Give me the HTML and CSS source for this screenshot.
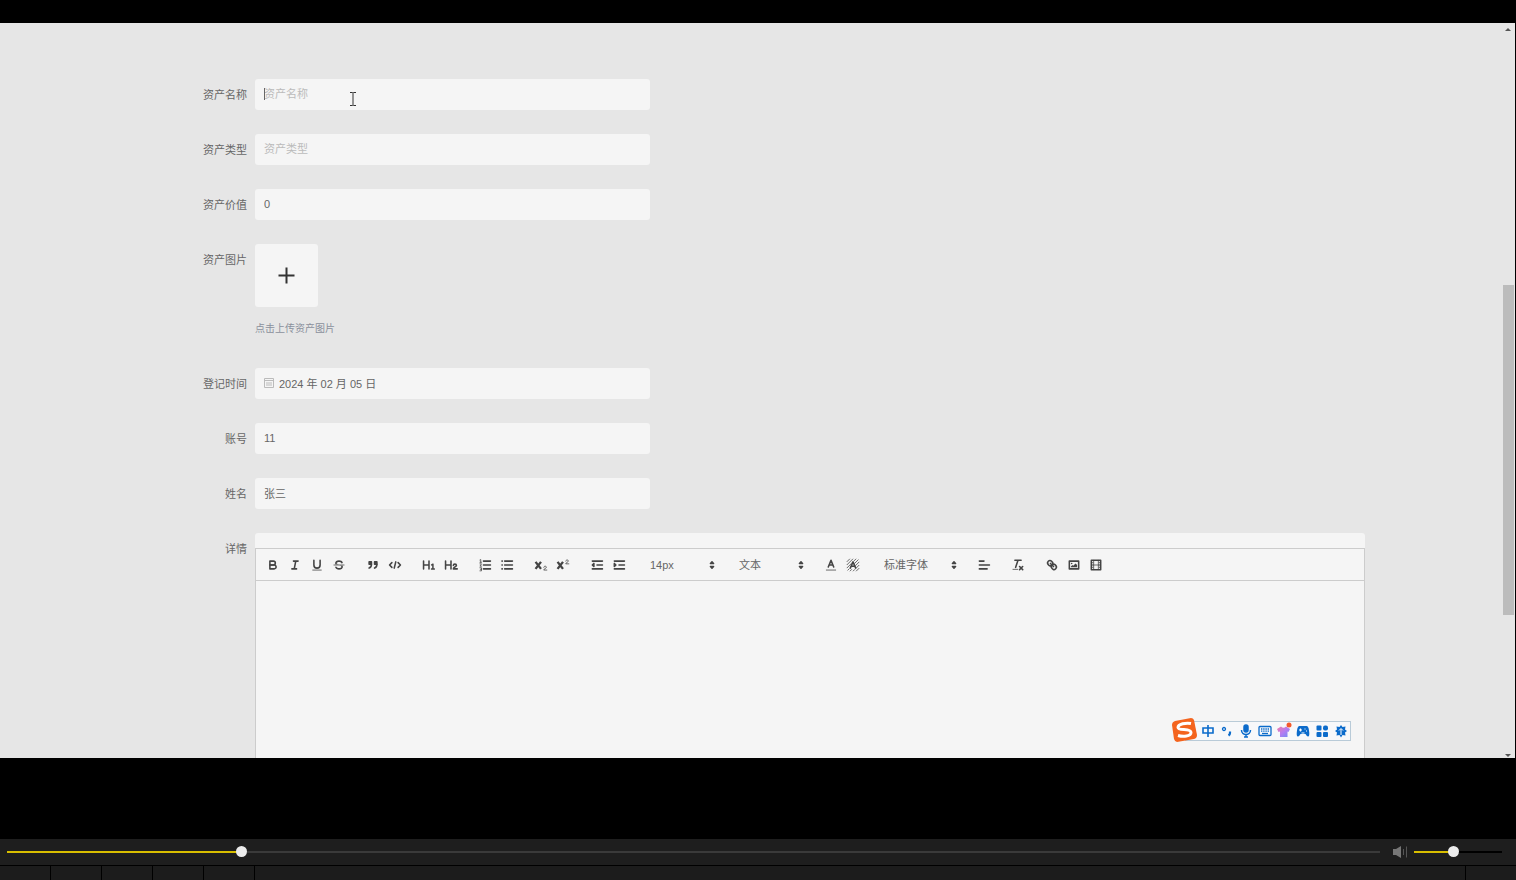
FILE: index.html
```html
<!DOCTYPE html>
<html lang="zh-CN">
<head>
    <meta charset="UTF-8">
    <meta name="viewport" content="width=device-width, initial-scale=1.0">
    <title>资产登记</title>
    <link rel="stylesheet" href="styles.css">
</head>
<body>
    <main class="screen">
        <form class="asset-form">
            <div class="form-item">
                <label class="form-label" for="name">资产名称</label>
                <div class="field">
                    <input class="text-input" id="name" type="text" placeholder="资产名称">
                    <span class="caret"></span>
                </div>
            </div>
            <div class="form-item">
                <label class="form-label" for="type">资产类型</label>
                <div class="field"><input class="text-input" id="type" type="text" placeholder="资产类型"></div>
            </div>
            <div class="form-item">
                <label class="form-label" for="price">资产价值</label>
                <div class="field"><input class="text-input" id="price" type="text" value="0"></div>
            </div>
            <div class="form-item">
                <label class="form-label" for="upload">资产图片</label>
                <div class="upload">
                    <button class="upload-btn" id="upload" type="button" aria-label="上传">
                        <svg width="17" height="17" viewBox="0 0 17 17"><path d="M8.5 .5v16M.5 8.5h16" stroke="#333" stroke-width="2" fill="none"/></svg>
                    </button>
                    <p class="upload-tip">点击上传资产图片</p>
                </div>
            </div>
            <div class="form-item">
                <label class="form-label" for="date">登记时间</label>
                <div class="field date-field">
                    <svg class="date-icon" width="10" height="10" viewBox="0 0 10 10" fill="none" stroke="#bbb"><path d="M.5 .5h9v9h-9zM.5 2.500h9M2 5h6M2 7h6"/></svg>
                    <input class="text-input" id="date" type="text" value="2024 年 02 月 05 日">
                </div>
            </div>
            <div class="form-item">
                <label class="form-label" for="account">账号</label>
                <div class="field"><input class="text-input" id="account" type="text" value="11"></div>
            </div>
            <div class="form-item">
                <label class="form-label" for="username">姓名</label>
                <div class="field"><input class="text-input" id="username" type="text" value="张三"></div>
            </div>
            <div class="form-item">
                <label class="form-label" for="detail">详情</label>
                <div class="editor">
                    <div class="toolbar">
                        <span class="formats">
                            <button type="button" aria-label="bold"><svg viewBox="0 0 18 18"><path class="st" d="M5,4H9.5A2.5,2.5,0,0,1,12,6.5v0A2.5,2.5,0,0,1,9.5,9H5Z"/><path class="st" d="M5,9h5.5A2.5,2.5,0,0,1,13,11.5v0A2.5,2.5,0,0,1,10.5,14H5Z"/></svg></button>
                            <button type="button" aria-label="italic"><svg viewBox="0 0 18 18"><path class="st" d="M7,4h6M5,14h6M8,14L10,4"/></svg></button>
                            <button type="button" aria-label="underline"><svg viewBox="0 0 18 18"><path class="st" d="M5,3V9a4.012,4.012,0,0,0,4,4H9a4.012,4.012,0,0,0,4-4V3"/><rect class="fl" x="3" y="15" width="12" height="1"/></svg></button>
                            <button type="button" aria-label="strike"><svg viewBox="0 0 18 18"><path class="thin" d="M15.5,9H2.5"/><path class="fl" d="M9.007,8C6.542,7.791,6,7.519,6,6.5,6,5.792,7.283,5,9,5c1.571,0,2.765.679,2.969,1.309a1,1,0,0,0,1.9-.617C13.356,4.106,11.354,3,9,3,6.2,3,4,4.538,4,6.5a3.2,3.2,0,0,0,.5,1.843Z"/><path class="fl" d="M8.984,10C11.457,10.208,12,10.479,12,11.5c0,.708-1.283,1.5-3,1.5-1.571,0-2.765-.679-2.969-1.309a1,1,0,1,0-1.9.617C4.644,13.894,6.646,15,9,15c2.8,0,5-1.538,5-3.5a3.2,3.2,0,0,0-.5-1.843Z"/></svg></button>
                        </span>
                        <span class="formats">
                            <button type="button" aria-label="blockquote"><svg viewBox="0 0 18 18"><path class="fl st" d="M4,5h3v3H4zM11,5h3v3h-3z"/><path class="st" d="M7,8c0,4.031-3,5-3,5M14,8c0,4.031-3,5-3,5"/></svg></button>
                            <button type="button" aria-label="code"><svg viewBox="0 0 18 18"><path class="st" d="M5,6 2,9 5,12M13,6 16,9 13,12M10,5L8,13"/></svg></button>
                        </span>
                        <span class="formats">
                            <button type="button" aria-label="H1"><svg viewBox="0 0 18 18"><path class="fl" d="M10,4V14a1,1,0,0,1-2,0V10H3v4a1,1,0,0,1-2,0V4A1,1,0,0,1,3,4V8H8V4a1,1,0,0,1,2,0Zm6.068,9.209H14.98V7.59a.543.543,0,0,0-.605-.605h-.627a1.01,1.01,0,0,0-.748.286L11.645,8.5a.544.544,0,0,0-.022.858l.352.385a.53.53,0,0,0,.847.011l.242-.22v3.675H12a.535.535,0,0,0-.605.6v.539a.54.54,0,0,0,.605.6h4.070a.54.54,0,0,0,.605-.6v-.539a.535.535,0,0,0-.607-.6Z"/></svg></button>
                            <button type="button" aria-label="H2"><svg viewBox="0 0 18 18"><path class="st" d="M2,4V14M9,4V14M2,9H9M12,9.5c0-2.200 4-2.200 4,0C16,11 12,12 12,14h5"/></svg></button>
                        </span>
                        <span class="formats">
                            <button type="button" aria-label="ordered"><svg viewBox="0 0 18 18"><path class="st" d="M7,4h9M7,9h9M7,14h9"/><path class="thin" d="M2.500,2.500 3.500,2V5.500M2.500,5.500h2M2.500,7.500h2L2.500,10.500h2M2.500,12.500h2v4h-2M3,14.500h1.500"/></svg></button>
                            <button type="button" aria-label="bullet"><svg viewBox="0 0 18 18"><path class="st" d="M6,4h10M6,9h10M6,14h10M2.500,4h.5M2.500,9h.5M2.500,14h.5"/></svg></button>
                        </span>
                        <span class="formats">
                            <button type="button" aria-label="sub"><svg viewBox="0 0 18 18"><path class="bold" d="M2,5L9,14M9,5L2,14"/><path class="thin" d="M12.500,12c0-2 3.500-2 3.500,0 0,1-3.500,2-3.500,3.500h4"/></svg></button>
                            <button type="button" aria-label="super"><svg viewBox="0 0 18 18"><path class="bold" d="M2,5L9,14M9,5L2,14"/><path class="thin" d="M12.500,4c0-2 3.500-2 3.500,0 0,1-3.500,2-3.500,3.500h4"/></svg></button>
                        </span>
                        <span class="formats">
                            <button type="button" aria-label="outdent"><svg viewBox="0 0 18 18"><path class="st" d="M3,14h13M3,4h13M9,9h7"/><path class="fl st" d="M5,7V11L3,9Z"/></svg></button>
                            <button type="button" aria-label="indent"><svg viewBox="0 0 18 18"><path class="st" d="M3,14h13M3,4h13M9,9h7"/><path class="fl st" d="M3,7V11L5,9Z"/></svg></button>
                        </span>
                        <span class="picker">
                            <select aria-label="字号"><option>14px</option></select>
                            <svg viewBox="0 0 18 18"><path class="fl st" d="M7,11 9,13 11,11ZM7,7 9,5 11,7Z"/></svg>
                        </span>
                        <span class="picker">
                            <select aria-label="标题"><option>文本</option></select>
                            <svg viewBox="0 0 18 18"><path class="fl st" d="M7,11 9,13 11,11ZM7,7 9,5 11,7Z"/></svg>
                        </span>
                        <span class="formats">
                            <button type="button" aria-label="color"><svg viewBox="0 0 18 18"><path class="thin" d="M3,15.500H15"/><path class="st" d="M5.500,11.500 9,3 12.500,11.500M6.500,9h5"/></svg></button>
                            <button type="button" aria-label="background"><svg viewBox="0 0 18 18"><path class="hatch" d="M1,5 5,1M1,9 9,1M1,13 13,1M2,16 16,2M5,17 17,5M9,17 17,9M13,17 17,13"/><path d="M4,14.500 9,3 14,14.500Z" fill="#f5f5f5"/><path class="st" d="M5.500,13 9,5 12.500,13M6.500,10.500h5"/></svg></button>
                        </span>
                        <span class="picker picker-font">
                            <select aria-label="字体"><option>标准字体</option></select>
                            <svg viewBox="0 0 18 18"><path class="fl st" d="M7,11 9,13 11,11ZM7,7 9,5 11,7Z"/></svg>
                        </span>
                        <span class="formats">
                            <button type="button" aria-label="align"><svg viewBox="0 0 18 18"><path class="st" d="M3,9H16M3,14H13M3,4H9"/></svg></button>
                        </span>
                        <span class="formats">
                            <button type="button" aria-label="clean"><svg viewBox="0 0 18 18"><path class="st" d="M5,3H13M6,12 9,3M11,11 15,15M15,11 11,15"/><rect class="fl" x="2" y="14" width="7" height="1"/></svg></button>
                        </span>
                        <span class="formats">
                            <button type="button" aria-label="link"><svg viewBox="0 0 18 18"><path class="st" d="M7,7L11,11M8.900,4.577a3.476,3.476,0,0,1,.36,4.679A3.476,3.476,0,0,1,4.577,8.900C3.185,7.500,2.035,6.400,4.217,4.217S7.500,3.185,8.900,4.577ZM13.423,9.100a3.476,3.476,0,0,0-4.679-.36,3.476,3.476,0,0,0,.36,4.679c1.392,1.392,2.500,2.542,4.679.36S14.815,10.500,13.423,9.100Z"/></svg></button>
                            <button type="button" aria-label="image"><svg viewBox="0 0 18 18"><rect class="st" x="3" y="4" width="12" height="10"/><circle class="fl" cx="6" cy="7" r="1"/><path class="fl" d="M5,12V11L7,9 8,10 11,7 13,9V12Z"/></svg></button>
                            <button type="button" aria-label="video"><svg viewBox="0 0 18 18"><path class="st" d="M3,3H15V15H3z"/><path class="thin" d="M6,3V15M12,3V15M5,9H13M3,6H5M3,9H5M3,12H5M13,6H15M13,9H15M13,12H15"/></svg></button>
                        </span>
                    </div>
                    <textarea class="editor-body" id="detail"></textarea>
                </div>
            </div>
        </form>

        <div class="scrollbar">
            <span class="arrow-up"></span>
            <div class="scroll-track"><div class="scroll-thumb"></div></div>
            <span class="arrow-down"></span>
        </div>

        <svg class="pointer" width="8" height="14" viewBox="0 0 8 14" fill="none" stroke="#333"><path d="M1 .5h2.500l.5 .5 .5-.5H7M1 13.500h2.500l.5-.5 .5 .5H7M4 1v12"/></svg>

        <!-- input method bar -->
        <div class="ime">
            <svg class="ime-logo" width="26" height="26" viewBox="0 0 26 26"><path d="M4 4 20 1Q22 1 23 3L26 18Q26 21 23 22L6 25Q4 25 3 22L1 8Q1 5 4 4Z" fill="#f4641e"/><path d="M20 6.500C15 5.500 7 7 7 10.500 7 14 20 11 20 15.500 20 19.500 12 20 7 18.500" fill="none" stroke="#fff" stroke-width="3"/></svg>
            <svg viewBox="0 0 14 14" fill="none" stroke="#0b6bcb" stroke-width="1.600"><path d="M2 4h10v5H2zM7 1v12"/></svg>
            <svg viewBox="0 0 14 14" fill="none" stroke="#0b6bcb"><circle cx="4" cy="5" r="1.500" stroke-width="1.300"/><path d="M10 7.500v1.500q0 1.500-1.500 2.500" stroke-width="2.200"/></svg>
            <svg viewBox="0 0 14 14" fill="none" stroke="#0b6bcb" stroke-width="1.500"><rect x="5" y="1" width="4" height="7" rx="2" fill="#0b6bcb"/><path d="M2.500 6c0 6 9 6 9 0M7 10.500V13M5 13h4"/></svg>
            <svg viewBox="0 0 14 14" fill="none" stroke="#0b6bcb" stroke-width="1.300"><rect x="1" y="2.500" width="12" height="9" rx="1"/><path d="M3 5h8M3 7.200h8" stroke-dasharray="1.400 .8"/><path d="M4 9.500h6"/></svg>
            <svg viewBox="0 0 14 14"><defs><linearGradient id="shirt" x1="0" y1="0" x2="1" y2="1"><stop offset="0" stop-color="#f27ba5"/><stop offset=".5" stop-color="#b77cf0"/><stop offset="1" stop-color="#6b8df5"/></linearGradient></defs><path d="M4 2.500Q6.500 5 9 2.500L13 5 11.500 8 10.500 7.500V13H3V7.500L1.500 8 0 5Z" fill="url(#shirt)"/><circle cx="12" cy="1" r="2.500" fill="#f4592b"/></svg>
            <svg viewBox="0 0 14 14"><path d="M3.500 2h7Q12.500 2 13 6.500 14 12.500 12 12.500 11 12.500 9.500 10h-5Q3 12.500 2 12.500 0 12.500 1 6.500 1.500 2 3.500 2Z" fill="#0b6bcb"/><path d="M3 6h3M4.500 4.500v3M8.500 5h1M10 7h1M5.500 9h3" stroke="#fff" stroke-width="1.200"/></svg>
            <svg viewBox="0 0 14 14" fill="#0b6bcb"><rect x="1.500" y="1.500" width="5" height="5" rx="1"/><rect x="8" y="1.500" width="5" height="5" rx="2"/><rect x="1.500" y="8" width="5" height="5" rx="1"/><rect x="8" y="8" width="5" height="5" rx="1"/></svg>
            <svg viewBox="0 0 14 14"><path d="M7 1 8.500 3 11.500 2.500 11 5.500 13 7 11 8.500 11.500 11.500 8.500 11 7 13.500 5.500 11 2.500 11.500 3 8.500 1 7 3 5.500 2.500 2.500 5.500 3Z" fill="#0b6bcb"/><path d="M5 6.500 7 4.500 9 6.500M7 5v6" stroke="#fff" fill="none"/></svg>
        </div>
    </main>

    <footer class="player">
        <div class="controls">
            <input class="slider timeline" type="range" min="0" max="1000" value="168" aria-label="播放进度">
            <svg class="speaker" width="16" height="14" viewBox="0 0 16 14"><path d="M1 4h3L9 1v12L4 10H1Z" fill="#777"/><path d="M11.500 4v6M14.500 1.500v11" stroke="#555" fill="none"/></svg>
            <input class="slider volume" type="range" min="0" max="1000" value="445" aria-label="音量">
        </div>
        <div class="tabs">
            <span></span><span></span><span></span><span></span><span></span>
            <span class="tab-wide"></span>
            <span></span>
        </div>
    </footer>
</body>
</html>
```
FILE: styles.css
```css
* {
    box-sizing: border-box;
}
body {
    margin: 0;
    height: 100vh;
    padding-top: 23px;
    display: flex;
    flex-direction: column;
    background-color: #000;
    color: #666;
    font-family: "Liberation Sans", "Noto Sans CJK SC", sans-serif;
    font-size: 11px;
    overflow: hidden;
}
input,
button,
select,
textarea {
    font: inherit;
    color: inherit;
    border: none;
    padding: 0;
    margin: 0;
    background: none;
    outline: none;
}

/* recorded page */
.screen {
    position: relative;
    flex: 1;
    min-height: 0;
    display: flex;
    margin-right: 1px;
    background-color: #e6e6e6;
    overflow: hidden;
}
.asset-form {
    flex: 1;
    display: flex;
    flex-direction: column;
    gap: 22px;
    padding: 56px 136px 0 176px;
}
.form-item {
    display: flex;
    align-items: flex-start;
    gap: 8px;
}
.form-label {
    width: 71px;
    line-height: 33px;
    text-align: right;
}
.field {
    position: relative;
    display: flex;
    width: 395px;
    height: 31px;
    padding: 0 9px;
    background-color: #f5f5f5;
    border-radius: 3px;
}
.text-input {
    flex: 1;
    min-width: 0;
    height: 29px;
}
.text-input::placeholder {
    color: #bbb;
}
.caret {
    position: absolute;
    left: 9px;
    top: 9px;
    width: 1px;
    height: 12px;
    background-color: #666;
}
.date-field {
    gap: 5px;
}
.date-icon {
    margin-top: 10px;
}
.upload-btn {
    display: flex;
    align-items: center;
    justify-content: center;
    width: 63px;
    height: 63px;
    background-color: #f5f5f5;
    border-radius: 3px;
}
.upload-tip {
    margin: 14px 0 10px;
    font-size: 10px;
    line-height: 15px;
    color: #8a909c;
}

/* rich text editor */
.editor {
    flex: 1;
    padding-top: 15px;
    background-color: #f5f5f5;
    border-radius: 3px 3px 0 0;
}
.toolbar {
    display: flex;
    align-items: center;
    gap: 12px;
    height: 33px;
    padding: 0 6px;
    border: 1px solid #ccc;
}
.formats {
    display: flex;
}
.formats button {
    display: flex;
    align-items: center;
    justify-content: center;
    width: 22px;
    height: 19px;
}
.toolbar svg {
    width: 14px;
    height: 14px;
}
.st,
.thin,
.bold,
.hatch {
    fill: none;
    stroke: #444;
    stroke-width: 2;
    stroke-linecap: round;
    stroke-linejoin: round;
}
.thin {
    stroke-width: 1;
}
.bold {
    stroke-width: 3;
    stroke-linecap: butt;
}
.hatch {
    stroke-width: 1;
    stroke-linecap: butt;
}
.fl {
    fill: #444;
}
.picker {
    position: relative;
    display: flex;
    width: 77px;
}
.picker-font {
    width: 85px;
}
.picker select {
    appearance: none;
    width: 100%;
    height: 19px;
    padding-left: 8px;
}
.picker svg {
    position: absolute;
    right: 0;
    top: 3px;
    pointer-events: none;
}
.editor-body {
    display: block;
    width: 100%;
    height: 320px;
    padding: 10px 12px;
    border: 1px solid #ccc;
    border-top: none;
    resize: none;
}

.scrollbar {
    display: flex;
    flex-direction: column;
    align-items: center;
    width: 14px;
    padding: 5px 0 1px;
}
.arrow-up,
.arrow-down {
    border: 3px solid transparent;
}
.arrow-up {
    border-top: none;
    border-bottom-color: #555;
}
.arrow-down {
    border-bottom: none;
    border-top-color: #555;
}
.scroll-track {
    flex: 1;
    display: flex;
    flex-direction: column;
    width: 11px;
}
.scroll-track::before {
    content: "";
    flex: 254;
}
.scroll-track::after {
    content: "";
    flex: 139;
}
.scroll-thumb {
    flex: 330;
    background-color: #bcbcbc;
}

.pointer {
    position: absolute;
    left: 349px;
    top: 69px;
}
.ime {
    position: absolute;
    right: 164px;
    bottom: 17px;
    display: flex;
    align-items: center;
    gap: 5px;
    width: 166px;
    height: 20px;
    padding-left: 15px;
    background-color: #f7f8fa;
    border: 1px solid #b9cbd8;
}
.ime svg {
    flex: none;
    width: 14px;
    height: 14px;
    overflow: visible;
}
.ime .ime-logo {
    position: absolute;
    left: -15px;
    top: -5px;
    width: 26px;
    height: 26px;
}

/* player */
.player {
    margin-top: 81px;
}
.controls {
    display: flex;
    align-items: center;
    height: 26px;
    padding: 0 14px 1px 7px;
    background-color: #1e1e1e;
}
.slider {
    --fill: 17%;
    appearance: none;
    height: 11px;
    background: linear-gradient(to right, #d8be00 var(--fill), #3a3a3a var(--fill)) center / 100% 2px no-repeat;
}
.slider::-webkit-slider-thumb {
    appearance: none;
    width: 11px;
    height: 11px;
    border-radius: 50%;
    background-color: #ececec;
}
.timeline {
    flex: 1;
}
.volume {
    --fill: 44%;
    width: 88px;
    background-image: linear-gradient(to right, #d8be00 var(--fill), #000 var(--fill));
}
.speaker {
    margin: 0 6px 0 12px;
}
.tabs {
    display: flex;
    gap: 1px;
    height: 14px;
    margin-top: 1px;
}
.tabs span {
    width: 50px;
    background-color: #1c1c1c;
}
.tabs .tab-wide {
    flex: 1;
}
```
